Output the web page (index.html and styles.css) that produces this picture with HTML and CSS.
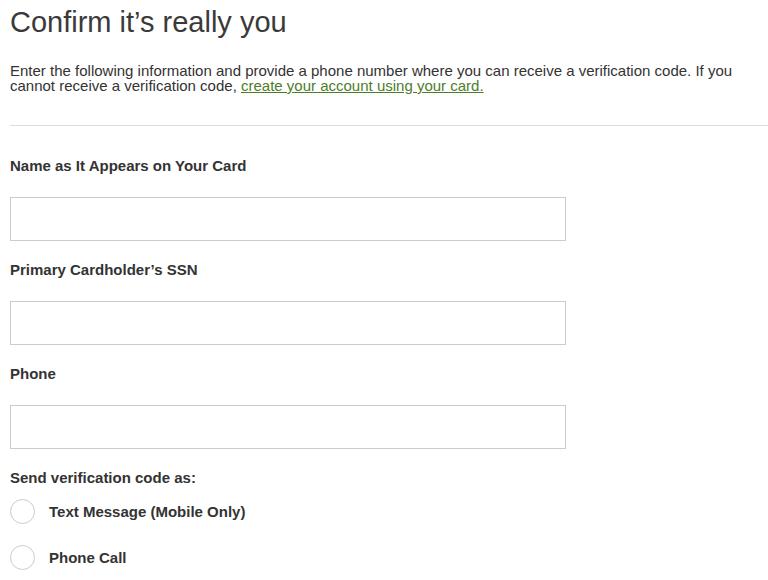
FILE: index.html
```html
<!DOCTYPE html>
<html>
<head>
    <meta name="viewport" content="width=device-width, initial-scale=1.0">
    <link rel="stylesheet" href="styles.css">
</head>
<body>
    <h1 class="page-title">Confirm it’s really you</h1>

    <p class="intro">
        Enter the following information and provide a phone number where you can receive a verification code. If you
        cannot receive a verification code, <a href="#" class="intro-link">create your account using your card.</a>
    </p>

    <hr class="divider">

    <!-- Card details -->
    <form class="verify-form">
        <div class="field">
            <label class="field-label" for="cardName">Name as It Appears on Your Card</label>
            <input class="field-input" id="cardName" type="text">
        </div>
        <div class="field">
            <label class="field-label" for="ssn">Primary Cardholder’s SSN</label>
            <input class="field-input" id="ssn" type="text">
        </div>
        <div class="field">
            <label class="field-label" for="phone">Phone</label>
            <input class="field-input" id="phone" type="text">
        </div>

        <div class="field-label">Send verification code as:</div>
        <div class="radio-group">
            <label class="radio-option">
                <input type="radio" name="method" value="text">
                <span class="radio-circle"></span>
                Text Message (Mobile Only)
            </label>
            <label class="radio-option">
                <input type="radio" name="method" value="call">
                <span class="radio-circle"></span>
                Phone Call
            </label>
        </div>
    </form>
</body>
</html>
```

FILE: styles.css
```css
body {
    font-family: "Liberation Sans", Arial, sans-serif;
    margin: 0;
    padding: 0 0 0 10px;
    color: #333;
    background: #fff;
}
.page-title {
    font-size: 29px;
    font-weight: normal;
    line-height: 34px;
    color: #3a3a3a;
    margin: 5px 0 0 0;
}
.intro {
    font-size: 15px;
    line-height: 15px;
    margin: 24px 0 0 0;
    padding-right: 20px;
}
.intro-link {
    color: #4e7d2a;
    text-decoration: underline;
}
.divider {
    border: none;
    border-top: 1px solid #ddd;
    margin: 32px 0 0 0;
}
.verify-form {
    margin-top: 30px;
}
.field {
    margin-bottom: 19px;
}
.field-label {
    display: block;
    font-size: 15px;
    font-weight: bold;
    line-height: 20px;
    color: #333;
}
.field-input {
    display: block;
    box-sizing: border-box;
    width: 556px;
    height: 44px;
    margin-top: 21px;
    border: 1px solid #ccc;
    background: #fff;
    padding: 0 10px;
    font-size: 15px;
}
.radio-group {
    margin-top: 11px;
}
.radio-option {
    display: flex;
    align-items: center;
    gap: 14px;
    font-size: 15px;
    font-weight: bold;
    margin-bottom: 21px;
}
.radio-option input {
    display: none;
}
.radio-circle {
    width: 25px;
    height: 25px;
    box-sizing: border-box;
    border: 1px solid #ccc;
    border-radius: 50%;
    background: #fff;
}
```
